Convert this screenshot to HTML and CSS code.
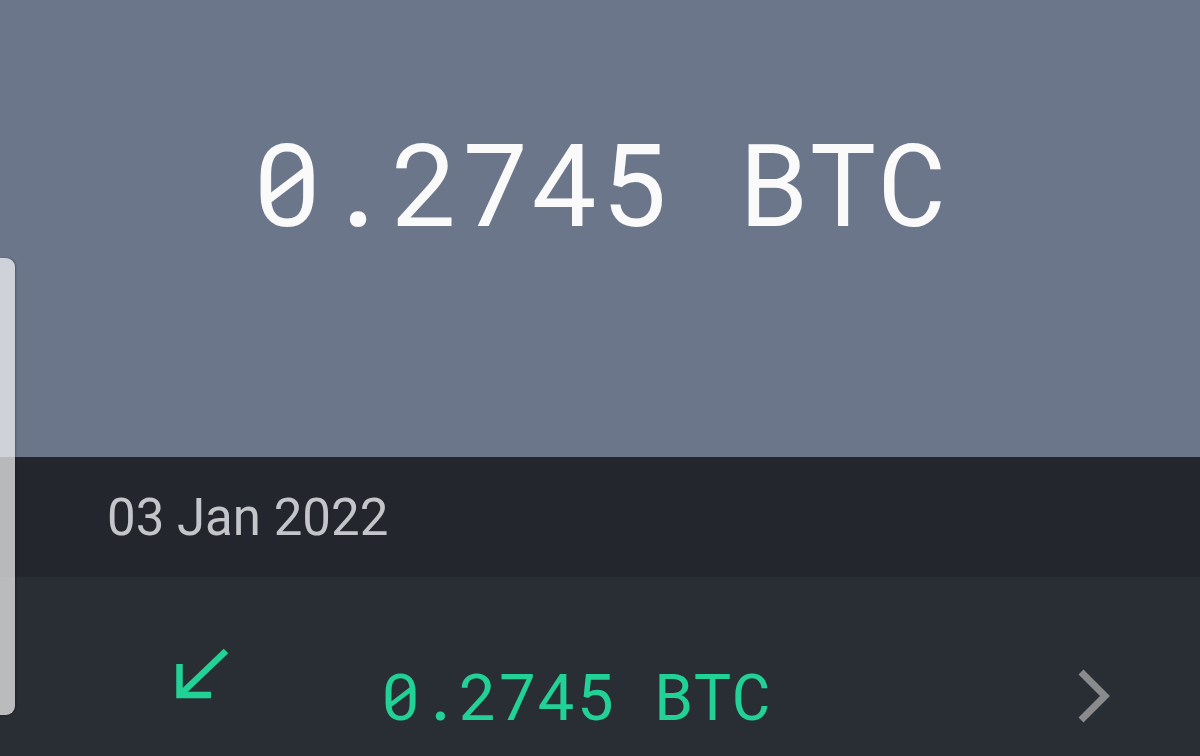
FILE: index.html
```html
<!DOCTYPE html>
<html lang="en">
<head>
<meta charset="utf-8">
<title>Transaction</title>
<link rel="stylesheet" href="styles.css">
</head>
<body>
<main class="screen">
  <section class="hero">
    <div class="hero-amount">0.2745 BTC</div>
  </section>
  <section class="date-band">
    <div class="date">03 Jan 2022</div>
  </section>
  <section class="tx-row">
    <svg class="tx-icon" width="56" height="54" viewBox="0 0 56 54" aria-hidden="true">
      <path d="M52 4 L8 46" stroke="#22d196" stroke-width="6.5" fill="none"/>
      <path d="M5.5 17 V48 H37" stroke="#22d196" stroke-width="6.5" fill="none" stroke-linejoin="miter"/>
    </svg>
    <div class="tx-amount">0.2745 BTC</div>
    <svg class="tx-chevron" width="40" height="60" viewBox="0 0 40 60" aria-hidden="true">
      <path d="M6 6 L30 30 L6 54" stroke="#8a8b8d" stroke-width="7" fill="none" stroke-linejoin="miter"/>
    </svg>
  </section>
  <div class="scroll-thumb"></div>
</main>
</body>
</html>
```

FILE: styles.css
```css
html, body {
  margin: 0;
  padding: 0;
  height: 100%;
  overflow: hidden;
  background: #292d34;
}

.screen {
  position: relative;
  width: 1200px;
  height: 756px;
  display: flex;
  flex-direction: column;
}

.hero {
  box-sizing: border-box;
  height: 457px;
  padding-top: 124px;
  background: #6b768a;
  display: flex;
  justify-content: center;
}

.hero-amount {
  font-family: "Roboto Mono", "DejaVu Sans Mono", monospace;
  font-size: 115px;
  line-height: 1;
  color: #fafafa;
  letter-spacing: 0.5px;
  white-space: nowrap;
}

.date-band {
  box-sizing: border-box;
  height: 120px;
  padding: 35px 0 0 107px;
  background: #23262d;
}

.date {
  font-family: Roboto, "Noto Sans", sans-serif;
  font-size: 51px;
  line-height: 1;
  color: #c3c5c8;
}

.tx-row {
  flex: 1;
  display: flex;
  align-items: flex-start;
  padding: 0 85px 0 174px;
  background: #292d34;
}

.tx-icon {
  margin-top: 70px;
  flex: none;
}

.tx-amount {
  margin: 86px 0 0 151px;
  font-family: "Roboto Mono", "DejaVu Sans Mono", monospace;
  font-size: 65px;
  line-height: 1;
  color: #22d196;
  white-space: nowrap;
}

.tx-chevron {
  margin: 89px 0 0 auto;
  flex: none;
}

.scroll-thumb {
  position: absolute;
  left: 0;
  top: 258px;
  width: 15px;
  height: 457px;
  background: rgba(255, 255, 255, 0.68);
  border-radius: 0 9px 9px 0;
  box-shadow: 1px 0 2px rgba(0, 0, 0, 0.25);
}
```
